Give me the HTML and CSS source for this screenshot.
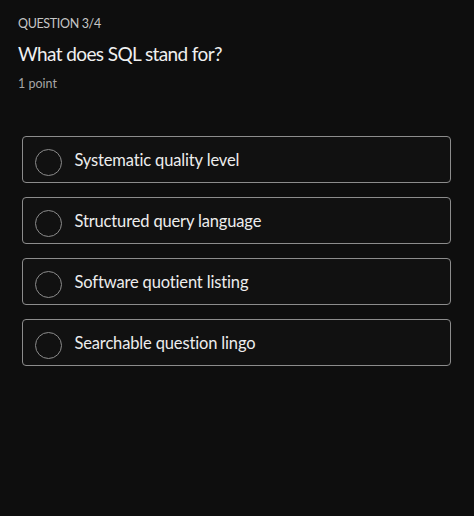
FILE: index.html
```html
<!DOCTYPE html>
<html>
<head>
<meta charset="utf-8">
<link rel="stylesheet" href="styles.css">
</head>
<body>
<div class="page">
  <header class="head">
    <div class="qnum">QUESTION 3/4</div>
    <h1 class="title">What does SQL stand for?</h1>
    <div class="points">1 point</div>
  </header>
  <ul class="options">
    <li class="option"><span class="radio"></span><span class="label">Systematic quality level</span></li>
    <li class="option"><span class="radio"></span><span class="label">Structured query language</span></li>
    <li class="option"><span class="radio"></span><span class="label">Software quotient listing</span></li>
    <li class="option"><span class="radio"></span><span class="label">Searchable question lingo</span></li>
  </ul>
</div>
</body>
</html>
```
FILE: styles.css
```css
html, body {
  margin: 0;
  padding: 0;
  background: #0e0e0e;
  height: 100%;
}
body {
  font-family: Lato, "Liberation Sans", sans-serif;
  font-variant-ligatures: none;
  color: #ececec;
}
.page {
  padding: 16px 23px 0 18px;
}
.head {
  display: flex;
  flex-direction: column;
}
.qnum {
  font-size: 12.5px;
  letter-spacing: -0.35px;
  color: #c6c6c6;
  line-height: 16px;
}
.title {
  margin: 10px 0 0 0;
  font-size: 19px;
  letter-spacing: -0.6px;
  font-weight: 400;
  line-height: 24px;
  color: #f0f0f0;
}
.points {
  margin-top: 10px;
  font-size: 12.5px;
  color: #a6a6a6;
  line-height: 16px;
}
.options {
  list-style: none;
  margin: 44px 0 0 4px;
  padding: 0;
  display: flex;
  flex-direction: column;
  gap: 14px;
}
.option {
  box-sizing: border-box;
  height: 47px;
  border: 1.5px solid #8c8c8c;
  border-radius: 4px;
  background: #111111;
  display: flex;
  align-items: center;
  padding-left: 11.5px;
  gap: 13px;
}
.radio {
  box-sizing: border-box;
  width: 27px;
  height: 27px;
  border-radius: 50%;
  border: 1.5px solid #8c8c8c;
  flex: none;
  margin-top: 5px;
}
.label {
  font-size: 16.5px;
  letter-spacing: -0.15px;
  color: #ededed;
}
```
